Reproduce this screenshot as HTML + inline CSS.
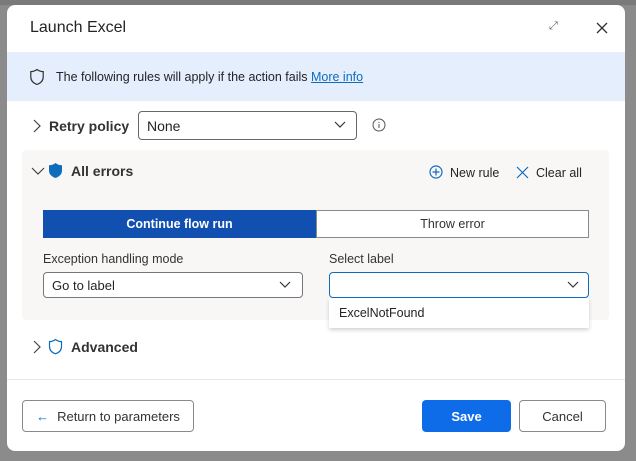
<!DOCTYPE html><html><head><style>
body{margin:0;width:636px;height:461px;background:#8b8b8b;font-family:"Liberation Sans",sans-serif;position:relative;overflow:hidden;color:#242424}
.a{position:absolute}
.dlg{left:7px;top:5px;width:618px;height:446px;background:#fff;border-radius:8px}
.sel{background:#fff;border:1px solid #666;border-radius:4px;box-sizing:border-box;font-size:13px;padding-left:8px;display:flex;align-items:center}
.btn{border:1px solid #8a8a8a;border-radius:4px;box-sizing:border-box;background:#fff;font-size:13px;display:flex;align-items:center;justify-content:center;font-weight:bold}
</style></head><body>
<div class="a" style="left:0;top:0;width:636px;height:5px;background:#7a7a7a"></div>
<div class="a dlg"></div>
<div class="a" style="left:30px;top:19px;font-size:16px">Launch Excel</div>
<div class="a" style="left:549px;top:20px;font-size:11px;color:#666">⤢</div>
<svg class="a" style="left:596px;top:22px" width="12" height="12"><path d="M1 1L11 11M11 1L1 11" stroke="#333" stroke-width="1.3"/></svg>
<div class="a" style="left:7px;top:52px;width:618px;height:49px;background:#e5eefc"></div>
<svg class="a" style="left:29px;top:68px" width="16" height="18"><path d="M8 1.5C6 3 4 3.6 1.8 3.6V9c0 4 3 6.3 6.2 7.5 3.2-1.2 6.2-3.5 6.2-7.5V3.6C12 3.6 10 3 8 1.5z" fill="none" stroke="#333" stroke-width="1.2"/></svg>
<div class="a" style="left:56px;top:70px;font-size:12.5px">The following rules will apply if the action fails <span style="color:#0f6cbd;text-decoration:underline">More info</span></div>
<svg class="a" style="left:33px;top:119px" width="8" height="14"><path d="M1 1L7 7 1 13" fill="none" stroke="#444" stroke-width="1.2"/></svg>
<div class="a" style="left:49px;top:118px;font-size:14px;font-weight:bold;color:#333">Retry policy</div>
<div class="a sel" style="left:138px;top:111px;width:219px;height:29px;font-size:14px">None</div>
<svg class="a" style="left:334px;top:121px" width="12" height="8"><path d="M1 1L6 6 11 1" fill="none" stroke="#333" stroke-width="1.2"/></svg>
<svg class="a" style="left:372px;top:118px" width="14" height="14"><circle cx="7" cy="7" r="6" fill="none" stroke="#555"/><path d="M7 6v4M7 4v1" stroke="#555"/></svg>
<div class="a" style="left:22px;top:150px;width:587px;height:170px;background:#f8f7f6;border-radius:4px"></div>
<svg class="a" style="left:31px;top:167px" width="14" height="8"><path d="M1 1L7 7 13 1" fill="none" stroke="#444" stroke-width="1.2"/></svg>
<svg class="a" style="left:48px;top:162px" width="15" height="17"><path d="M7.5 1C5.5 2.6 3.5 3.2 1 3.2V8.5c0 4 3 6.3 6.5 7.5 3.5-1.2 6.5-3.5 6.5-7.5V3.2C11.5 3.2 9.5 2.6 7.5 1z" fill="#0f6cbd"/></svg>
<div class="a" style="left:71px;top:163px;font-size:14px;font-weight:bold;color:#333">All errors</div>
<svg class="a" style="left:429px;top:165px" width="14" height="14"><circle cx="7" cy="7" r="6" fill="none" stroke="#0f6cbd" stroke-width="1.2"/><path d="M7 3.5v7M3.5 7h7" stroke="#0f6cbd" stroke-width="1.2"/></svg>
<div class="a" style="left:450px;top:166px;font-size:12.5px">New rule</div>
<svg class="a" style="left:516px;top:166px" width="13" height="13"><path d="M1 1L12 12M12 1L1 12" stroke="#0f6cbd" stroke-width="1.2"/></svg>
<div class="a" style="left:536px;top:166px;font-size:12.5px">Clear all</div>
<div class="a" style="left:43px;top:210px;width:273px;height:28px;background:#114fb1;color:#fff;font-size:12.5px;font-weight:bold;display:flex;align-items:center;justify-content:center">Continue flow run</div>
<div class="a" style="left:316px;top:210px;width:273px;height:28px;box-sizing:border-box;border:1px solid #8a8a8a;background:#fff;font-size:12.5px;display:flex;align-items:center;justify-content:center;color:#333">Throw error</div>
<div class="a" style="left:43px;top:252px;font-size:12.5px;color:#333">Exception handling mode</div>
<div class="a" style="left:329px;top:252px;font-size:12.5px;color:#333">Select label</div>
<div class="a sel" style="left:43px;top:272px;width:260px;height:26px;border-color:#777">Go to label</div>
<svg class="a" style="left:279px;top:281px" width="12" height="8"><path d="M1 1L6 6 11 1" fill="none" stroke="#333" stroke-width="1.2"/></svg>
<div class="a sel" style="left:329px;top:272px;width:260px;height:26px;border-color:#0f6cbd"></div>
<svg class="a" style="left:567px;top:281px" width="12" height="8"><path d="M1 1L6 6 11 1" fill="none" stroke="#333" stroke-width="1.2"/></svg>
<div class="a" style="left:329px;top:298px;width:260px;height:30px;background:#fff;box-shadow:0 2px 4px rgba(0,0,0,.18);font-size:12.5px;display:flex;align-items:center;padding-left:10px;box-sizing:border-box">ExcelNotFound</div>
<svg class="a" style="left:33px;top:340px" width="8" height="14"><path d="M1 1L7 7 1 13" fill="none" stroke="#444" stroke-width="1.2"/></svg>
<svg class="a" style="left:48px;top:338px" width="15" height="17"><path d="M7.5 1.5C5.5 3 3.5 3.6 1.5 3.6V8.5c0 4 3 6.3 6 7.3 3-1 6-3.3 6-7.3V3.6C11.5 3.6 9.5 3 7.5 1.5z" fill="none" stroke="#0f6cbd" stroke-width="1.2"/></svg>
<div class="a" style="left:71px;top:339px;font-size:14px;font-weight:bold;color:#333">Advanced</div>
<div class="a" style="left:7px;top:379px;width:618px;height:1px;background:#e6e6e6"></div>
<div class="a btn" style="left:22px;top:400px;width:172px;height:32px;font-weight:normal;color:#333"><span style="color:#0f6cbd;margin-right:8px">←</span>Return to parameters</div>
<div class="a btn" style="left:422px;top:400px;width:89px;height:32px;background:#0f6ce8;border-color:#0f6ce8;color:#fff">Save</div>
<div class="a btn" style="left:519px;top:400px;width:87px;height:32px;font-weight:normal;color:#333">Cancel</div>
</body></html>
